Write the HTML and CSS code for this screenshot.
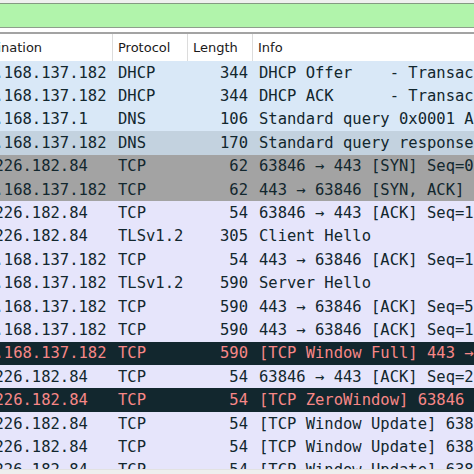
FILE: index.html
```html
<!DOCTYPE html>
<html>
<head>
<meta charset="utf-8">
<link rel="stylesheet" href="styles.css">
</head>
<body>
<div class="app">
  <div class="topgap"></div>
  <div class="filter"></div>
  <div class="spacer"></div>
  <div class="split"></div>
  <div class="list">
    <div class="head">
      <div class="hc dst">Destination</div>
      <div class="hc">Protocol</div>
      <div class="hc">Length</div>
      <div class="hc info">Info</div>
    </div>
    <div class="row udp"><span class="dst">192.168.137.182</span><span class="pr">DHCP</span><span class="len">344</span><span class="inf">DHCP Offer    - Transaction ID 0x1a2b3c4d</span></div>
    <div class="row udp"><span class="dst">192.168.137.182</span><span class="pr">DHCP</span><span class="len">344</span><span class="inf">DHCP ACK      - Transaction ID 0x1a2b3c4d</span></div>
    <div class="row udp"><span class="dst">192.168.137.1</span><span class="pr">DNS</span><span class="len">106</span><span class="inf">Standard query 0x0001 A example.com</span></div>
    <div class="row sel"><span class="dst">192.168.137.182</span><span class="pr">DNS</span><span class="len">170</span><span class="inf">Standard query response 0x0001 A</span></div>
    <div class="row syn"><span class="dst">13.226.182.84</span><span class="pr">TCP</span><span class="len">62</span><span class="inf">63846 → 443 [SYN] Seq=0 Win=64240</span></div>
    <div class="row syn"><span class="dst">192.168.137.182</span><span class="pr">TCP</span><span class="len">62</span><span class="inf">443 → 63846 [SYN, ACK] Seq=0 Ack=1</span></div>
    <div class="row tcp"><span class="dst">13.226.182.84</span><span class="pr">TCP</span><span class="len">54</span><span class="inf">63846 → 443 [ACK] Seq=1 Ack=1</span></div>
    <div class="row tcp"><span class="dst">13.226.182.84</span><span class="pr">TLSv1.2</span><span class="len">305</span><span class="inf">Client Hello</span></div>
    <div class="row tcp"><span class="dst">192.168.137.182</span><span class="pr">TCP</span><span class="len">54</span><span class="inf">443 → 63846 [ACK] Seq=1 Ack=252</span></div>
    <div class="row tcp"><span class="dst">192.168.137.182</span><span class="pr">TLSv1.2</span><span class="len">590</span><span class="inf">Server Hello</span></div>
    <div class="row tcp"><span class="dst">192.168.137.182</span><span class="pr">TCP</span><span class="len">590</span><span class="inf">443 → 63846 [ACK] Seq=537 Ack=252</span></div>
    <div class="row tcp"><span class="dst">192.168.137.182</span><span class="pr">TCP</span><span class="len">590</span><span class="inf">443 → 63846 [ACK] Seq=1073 Ack=252</span></div>
    <div class="row bad"><span class="dst">192.168.137.182</span><span class="pr">TCP</span><span class="len">590</span><span class="inf">[TCP Window Full] 443 → 63846 [ACK]</span></div>
    <div class="row tcp"><span class="dst">13.226.182.84</span><span class="pr">TCP</span><span class="len">54</span><span class="inf">63846 → 443 [ACK] Seq=252 Ack=1609</span></div>
    <div class="row bad"><span class="dst">13.226.182.84</span><span class="pr">TCP</span><span class="len">54</span><span class="inf">[TCP ZeroWindow] 63846 → 443 [ACK]</span></div>
    <div class="row tcp"><span class="dst">13.226.182.84</span><span class="pr">TCP</span><span class="len">54</span><span class="inf">[TCP Window Update] 63846 → 443</span></div>
    <div class="row tcp"><span class="dst">13.226.182.84</span><span class="pr">TCP</span><span class="len">54</span><span class="inf">[TCP Window Update] 63846 → 443</span></div>
    <div class="row tcp"><span class="dst">13.226.182.84</span><span class="pr">TCP</span><span class="len">54</span><span class="inf">[TCP Window Update] 63846 → 443</span></div>
  </div>
  <div class="hscroll"></div>
</div>
</body>
</html>
```

FILE: styles.css
```css
html, body {
  margin: 0;
  padding: 0;
  background: #ffffff;
  overflow: hidden;
}
.app {
  width: 474px;
  height: 474px;
  overflow: hidden;
  display: flex;
  flex-direction: column;
  background: #ffffff;
}
.topgap {
  height: 3px;
  background: #eef0ee;
  flex: none;
}
.filter {
  flex: none;
  height: 23px;
  background: #b1f4ab;
  border-top: 1px solid #849a82;
  border-bottom: 1px solid #8e9e8c;
}
.spacer {
  flex: none;
  height: 4px;
  background: #ffffff;
}
.split {
  flex: none;
  height: 2px;
  background: #a3a3a3;
}
.list {
  flex: 1;
  min-height: 0;
  overflow: hidden;
  background: #ffffff;
}
.hscroll {
  flex: none;
  height: 4px;
  background: #eeeeee;
  border-top: 1px solid #e2e2e2;
}
.head {
  display: grid;
  grid-template-columns: 113px 75px 65px 1fr;
  height: 27px;
  background: #ffffff;
  font-family: "DejaVu Sans", sans-serif;
  font-size: 13px;
  color: #1a1a1a;
}
.hc {
  display: flex;
  align-items: center;
  padding-left: 5px;
  border-right: 1px solid #dcdcdc;
  white-space: nowrap;
  overflow: hidden;
}
.hc.dst {
  padding-left: 0;
  text-indent: -32.5px;
}
.hc.info {
  border-right: none;
}
.row {
  display: grid;
  grid-template-columns: 113px 75px 65px 1fr;
  height: 23.4px;
  align-items: center;
  font-family: "DejaVu Sans Mono", monospace;
  font-size: 15.5px;
  color: #12272e;
  white-space: pre;
}
.row span {
  overflow: hidden;
  white-space: pre;
}
.row .dst {
  text-indent: -33.5px;
}
.row .pr {
  padding-left: 5px;
}
.row .len {
  text-align: right;
  padding-right: 5px;
}
.row .inf {
  padding-left: 6px;
}
.udp { background: #d9e8f7; }
.sel { background: #c3d2df; }
.syn { background: #a3a3a3; }
.tcp { background: #e6e5fb; }
.bad {
  background: #12272e;
  color: #f78787;
}
```
